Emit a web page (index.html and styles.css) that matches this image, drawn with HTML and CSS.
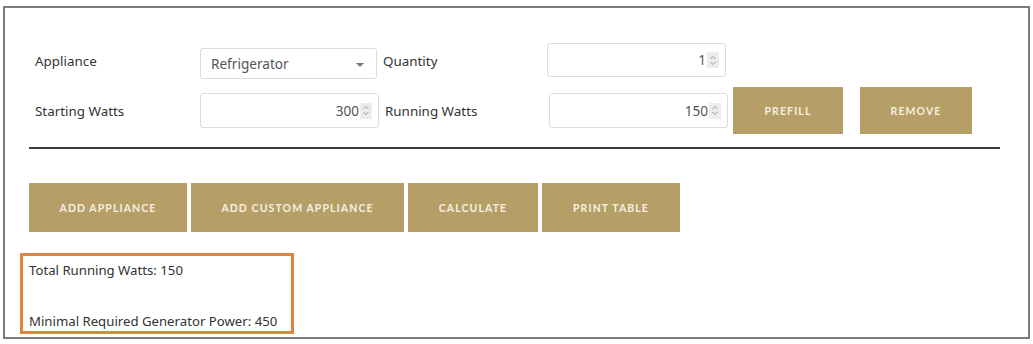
FILE: index.html
```html
<!DOCTYPE html>
<html>
<head>
<meta charset="utf-8">
<link rel="stylesheet" href="styles.css">
</head>
<body>
<div class="frame">
  <div class="form">
    <div class="row row1">
      <div class="label lab1">Appliance</div>
      <div class="field select">
        <span class="val-left">Refrigerator</span>
        <span class="caret"></span>
      </div>
      <div class="label lab2">Quantity</div>
      <div class="field num qty">
        <span class="val">1</span>
        <span class="spin"><svg width="8" height="11" viewBox="0 0 8 11"><path d="M1.5 4 L4 1.5 L6.5 4 M1.5 7 L4 9.5 L6.5 7" fill="none" stroke="#9a9a9a" stroke-width="1"/></svg></span>
      </div>
    </div>
    <div class="row row2">
      <div class="label lab1">Starting Watts</div>
      <div class="field num start">
        <span class="val">300</span>
        <span class="spin"><svg width="8" height="11" viewBox="0 0 8 11"><path d="M1.5 4 L4 1.5 L6.5 4 M1.5 7 L4 9.5 L6.5 7" fill="none" stroke="#9a9a9a" stroke-width="1"/></svg></span>
      </div>
      <div class="label lab2b">Running Watts</div>
      <div class="field num run">
        <span class="val">150</span>
        <span class="spin"><svg width="8" height="11" viewBox="0 0 8 11"><path d="M1.5 4 L4 1.5 L6.5 4 M1.5 7 L4 9.5 L6.5 7" fill="none" stroke="#9a9a9a" stroke-width="1"/></svg></span>
      </div>
      <button class="btn prefill">Prefill</button>
      <button class="btn remove">Remove</button>
    </div>
  </div>
  <div class="rule"></div>
  <div class="actions">
    <button class="btn b1">Add Appliance</button>
    <button class="btn b2">Add Custom Appliance</button>
    <button class="btn b3">Calculate</button>
    <button class="btn b4">Print Table</button>
  </div>
  <div class="results">
    <div class="res">Total Running Watts: 150</div>
    <div class="res">Minimal Required Generator Power: 450</div>
  </div>
</div>
</body>
</html>
```
FILE: styles.css
```css
* { box-sizing: border-box; }
html, body { margin: 0; padding: 0; background: #fff; }
body { font-family: "Noto Sans", "Open Sans", sans-serif; color: #333; }

.frame {
  margin: 6px 0 0 3px;
  width: 1027px;
  height: 333px;
  border: 2px solid #7b7b7b;
}

.form { padding-top: 35px; padding-left: 30px; }

.row { display: flex; }
.row1 { height: 36px; align-items: flex-start; }
.row2 { height: 47px; margin-top: 8px; align-items: center; }

.label { font-size: 13.4px; line-height: 20px; color: #333; }
.row1 .label { margin-top: 8px; }
.lab1 { width: 165px; }
.lab2 { width: 164px; margin-left: 6px; }
.lab2b { width: 164px; margin-left: 6px; }

.field {
  border: 1px solid #dcdcdc;
  border-radius: 3px;
  background: #fff;
  display: flex;
  align-items: center;
  font-size: 13.6px;
  color: #555;
}

.select { width: 177px; height: 31px; margin-top: 5px; padding: 0 12px 0 10px; justify-content: space-between; }
.caret { width: 0; height: 0; border-left: 4px solid transparent; border-right: 4px solid transparent; border-top: 4px solid #777; margin-top: 2px; }

.num { justify-content: flex-end; padding-right: 6px; }
.qty { width: 179px; height: 34px; }
.start { width: 179px; height: 35px; }
.run { width: 179px; height: 35px; }
.val { line-height: 20px; }
.spin {
  width: 12px; height: 16px; margin-left: 1px;
  background: #ececec;
  display: flex; align-items: center; justify-content: center;
}

.btn {
  border: 0;
  background: #b69e67;
  color: #f6efe0;
  font-family: "Lato", "Noto Sans", sans-serif;
  font-weight: 700;
  font-size: 10.5px;
  letter-spacing: 1.1px;
  text-transform: uppercase;
  padding: 0;
  cursor: pointer;
}
.prefill { width: 110px; height: 47px; margin-left: 5px; }
.remove { width: 112px; height: 47px; margin-left: 17px; }

.rule { margin: 13px 0 0 24px; width: 971px; height: 0; border-top: 2px solid #3a3a3a; }

.actions { display: flex; gap: 4px; margin: 34px 0 0 24px; }
.actions .btn { height: 49px; }
.b1 { width: 158px; }
.b2 { width: 213px; }
.b3 { width: 130px; }
.b4 { width: 138px; }

.results {
  margin: 21px 0 0 15px;
  width: 274px;
  height: 81px;
  border: 3px solid #e5843f;
  padding: 5px 0 0 6px;
}
.res { font-size: 13.2px; line-height: 18px; color: #333; }
.res + .res { margin-top: 33px; }
```
